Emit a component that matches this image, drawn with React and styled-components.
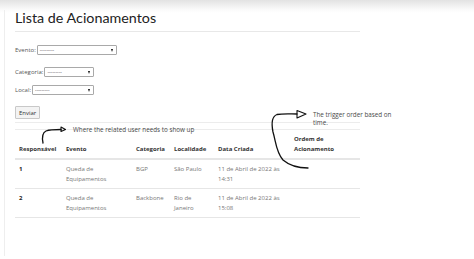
import React from "react";
import styled, { createGlobalStyle } from "styled-components";

const Global = createGlobalStyle`
  html, body { margin: 0; padding: 0; background: #fff; }
  body { font-family: "Open Sans", "Noto Sans", sans-serif; color: #333; width: 474px; height: 259px; overflow: hidden; }
`;

const Frame = styled.div`
  position: relative;
  width: 474px;
  height: 259px;
  background: linear-gradient(to bottom, #e2e2e2 0px, #efefef 5px, #fbfbfb 10px, #fff 13px);
`;

const EdgeLine = styled.div`
  position: absolute;
  left: 4px;
  top: 10px;
  width: 1px;
  height: 246px;
  background: #eeeeee;
`;

const Page = styled.div`
  position: relative;
  padding: 8px 0 0 15px;
  width: 345px;
`;

const Title = styled.h1`
  margin: 0;
  font-family: "Lato", "Open Sans", sans-serif;
  font-size: 14.3px;
  font-weight: 400;
  color: #222;
  line-height: 20px;
  padding-bottom: 3px;
  border-bottom: 1px solid #e8e8e8;
`;

const Form = styled.form`
  display: flex;
  flex-direction: column;
  align-items: flex-start;
  margin-top: 13px;
  gap: 8px;
`;

const Field = styled.div`
  display: flex;
  align-items: center;
  gap: 1px;
  margin-top: ${(p) => p.$mt || 0}px;
  font-size: 6px;
  color: #555;
  height: 10px;
`;

const Select = styled.div`
  display: flex;
  align-items: center;
  justify-content: space-between;
  box-sizing: border-box;
  width: ${(p) => p.$w}px;
  height: 10px;
  border: 1px solid #a9a9a9;
  border-radius: 1px;
  padding: 0 3px 0 2px;
  font-size: 5px;
  color: #444;
  background: #fff;
`;

const Caret = styled.span`
  width: 0;
  height: 0;
  border-left: 1.5px solid transparent;
  border-right: 1.5px solid transparent;
  border-top: 3px solid #111;
`;

const Button = styled.button`
  margin-top: 3px;
  box-sizing: border-box;
  height: 13px;
  padding: 0 3px;
  font-family: inherit;
  font-size: 6px;
  color: #333;
  background: #f3f3f3;
  border: 1px solid #c8c8c8;
  border-radius: 1px;
`;

const Rule = styled.div`
  margin-top: 3px;
  border-top: 1px solid #ececec;
  height: 6px;
`;

const TableWrap = styled.div`
  position: relative;
`;

const Table = styled.table`
  width: 345px;
  border-collapse: collapse;
  table-layout: fixed;
  border-top: 1px solid #ececec;
`;

const Th = styled.th`
  text-align: left;
  vertical-align: bottom;
  font-size: 6px;
  font-weight: 700;
  color: #333;
  line-height: 10px;
  padding: 4px 4px 4px 4px;
  border-bottom: 2px solid #e6e6e6;
`;

const Td = styled.td`
  vertical-align: top;
  font-size: 6px;
  font-weight: ${(p) => (p.$bold ? 700 : 400)};
  color: ${(p) => (p.$bold ? "#222" : "#777")};
  line-height: 10px;
  padding: 4px 4px 4px 4px;
  height: 20px;
  border-bottom: 1px solid #e6e6e6;
`;

const Note = styled.div`
  position: absolute;
  left: ${(p) => p.$x}px;
  top: ${(p) => p.$y}px;
  width: ${(p) => p.$w}px;
  font-size: 6.3px;
  line-height: 8px;
  color: #4a4a4a;
`;

const Doodle = styled.svg`
  position: absolute;
  left: 0;
  top: 0;
  overflow: visible;
  pointer-events: none;
`;

const rows = [
  { n: "1", ev: "Queda de Equipamentos", cat: "BGP", loc: "São Paulo", data: "11 de Abril de 2022 às 14:31" },
  { n: "2", ev: "Queda de Equipamentos", cat: "Backbone", loc: "Rio de Janeiro", data: "11 de Abril de 2022 às 15:08" },
];

export default function App() {
  return (
    <>
      <Global />
      <Frame>
        <EdgeLine />
        <Page>
          <Title>Lista de Acionamentos</Title>
          <Form>
            <Field>
              Evento: <Select $w={80}>---------<Caret /></Select>
            </Field>
            <Field $mt={4}>
              Categoria: <Select $w={50}>---------<Caret /></Select>
            </Field>
            <Field>
              Local: <Select $w={62}>---------<Caret /></Select>
            </Field>
            <Button type="button">Enviar</Button>
          </Form>
          <Rule />
          <TableWrap>
            <Table>
              <colgroup>
                <col style={{ width: 47 }} />
                <col style={{ width: 70 }} />
                <col style={{ width: 38 }} />
                <col style={{ width: 44 }} />
                <col style={{ width: 76 }} />
                <col style={{ width: 70 }} />
              </colgroup>
              <thead>
                <tr>
                  <Th>Responsável</Th>
                  <Th>Evento</Th>
                  <Th>Categoria</Th>
                  <Th>Localidade</Th>
                  <Th>Data Criada</Th>
                  <Th>Ordem de Acionamento</Th>
                </tr>
              </thead>
              <tbody>
                {rows.map((r) => (
                  <tr key={r.n}>
                    <Td $bold>{r.n}</Td>
                    <Td>{r.ev}</Td>
                    <Td>{r.cat}</Td>
                    <Td>{r.loc}</Td>
                    <Td>{r.data}</Td>
                    <Td />
                  </tr>
                ))}
              </tbody>
            </Table>
          </TableWrap>
        </Page>
        <Doodle width="474" height="259" viewBox="0 0 474 259">
          <path d="M43 143 C42 138 42 133 46 131 C50 129.5 56 129.5 61 129.5" fill="none" stroke="#111" strokeWidth="1.3" strokeLinecap="round" />
          <path d="M61 127 L65.5 129.5 L61 131.5 Z" fill="none" stroke="#111" strokeWidth="1.1" strokeLinejoin="round" />
          <path d="M308 168 C299 168 290 166 283 160 C276 152 276 142 273 132 C271 122 273 116 277 114.5 C283 113.5 290 114 297 114" fill="none" stroke="#111" strokeWidth="1.3" strokeLinecap="round" />
          <path d="M297 110.5 L306 114 L297 118 Z" fill="none" stroke="#111" strokeWidth="1.1" strokeLinejoin="round" />
        </Doodle>
        <Note $x={73} $y={126} $w={200}>Where the related user needs to show up</Note>
        <Note $x={313} $y={111} $w={90}>The trigger order based on time.</Note>
      </Frame>
    </>
  );
}
